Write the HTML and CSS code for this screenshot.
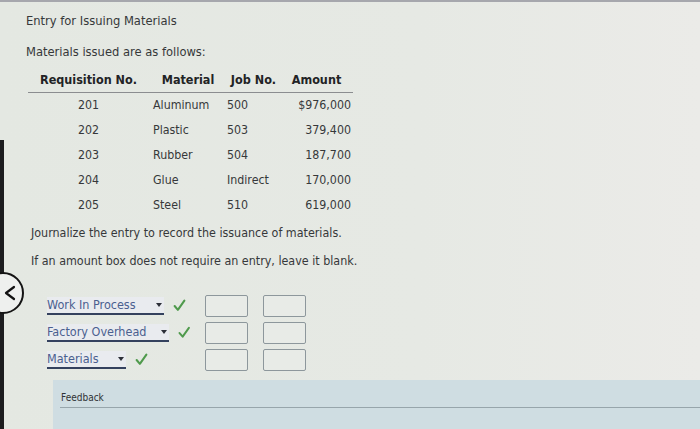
FILE: index.html
```html
<!DOCTYPE html>
<html>
<head>
<meta charset="utf-8">
<link rel="stylesheet" href="styles.css">
</head>
<body>
<div class="page">
  <div class="content">
    <div class="title">Entry for Issuing Materials</div>
    <div class="intro">Materials issued are as follows:</div>
    <div class="table">
      <div class="th">Requisition No.</div>
      <div class="th">Material</div>
      <div class="th">Job No.</div>
      <div class="th">Amount</div>

      <div class="td c1">201</div><div class="td c2">Aluminum</div><div class="td c3">500</div><div class="td c4">$976,000</div>
      <div class="td c1">202</div><div class="td c2">Plastic</div><div class="td c3">503</div><div class="td c4">379,400</div>
      <div class="td c1">203</div><div class="td c2">Rubber</div><div class="td c3">504</div><div class="td c4">187,700</div>
      <div class="td c1">204</div><div class="td c2">Glue</div><div class="td c3">Indirect</div><div class="td c4">170,000</div>
      <div class="td c1">205</div><div class="td c2">Steel</div><div class="td c3">510</div><div class="td c4">619,000</div>
    </div>
    <p class="instr first">Journalize the entry to record the issuance of materials.</p>
    <p class="instr second">If an amount box does not require an entry, leave it blank.</p>

    <div class="journal">
      <div class="acct">
        <span class="select w1"><span class="label">Work In Process</span><span class="arrow"></span></span>
        <svg class="check" viewBox="0 0 12 12"><path d="M1.5 6.5 L4.5 10 L10.5 1.5" fill="none" stroke="#4f9a4c" stroke-width="1.9" stroke-linecap="round" stroke-linejoin="round"/></svg>
      </div>
      <div class="box"></div>
      <div class="box"></div>

      <div class="acct">
        <span class="select w2"><span class="label">Factory Overhead</span><span class="arrow"></span></span>
        <svg class="check" viewBox="0 0 12 12"><path d="M1.5 6.5 L4.5 10 L10.5 1.5" fill="none" stroke="#4f9a4c" stroke-width="1.9" stroke-linecap="round" stroke-linejoin="round"/></svg>
      </div>
      <div class="box"></div>
      <div class="box"></div>

      <div class="acct">
        <span class="select w3"><span class="label">Materials</span><span class="arrow"></span></span>
        <svg class="check" viewBox="0 0 12 12"><path d="M1.5 6.5 L4.5 10 L10.5 1.5" fill="none" stroke="#4f9a4c" stroke-width="1.9" stroke-linecap="round" stroke-linejoin="round"/></svg>
      </div>
      <div class="box"></div>
      <div class="box"></div>
    </div>
  </div>

  <div class="feedback">
    <div class="fb-title">Feedback</div>
    <div class="fb-rule"></div>
  </div>

  <div class="edge-bar"></div>
  <div class="back-btn">
    <svg viewBox="0 0 20 20"><path d="M13 4 L5 10 L13 16" fill="none" stroke="#111" stroke-width="2.2" stroke-linecap="round" stroke-linejoin="round"/></svg>
  </div>
</div>
</body>
</html>
```

FILE: styles.css
```css
html, body {
  margin: 0;
  padding: 0;
  width: 700px;
  height: 429px;
  overflow: hidden;
}
body {
  background: #e5e8e3;
  font-family: "DejaVu Sans Condensed", "DejaVu Sans", Verdana, sans-serif;
  font-stretch: condensed;
  color: #36383a;
}
.page {
  position: relative;
  width: 700px;
  height: 429px;
  border-top: 2px solid #a6a7ad;
  box-sizing: border-box;
  background: linear-gradient(90deg, #e4e8e2 0%, #e6e9e4 60%, #ebebe8 100%);
}
.content {
  padding-left: 26px;
}
.title {
  padding-top: 11px;
  font-size: 12.8px;
  line-height: 16px;
}
.intro {
  margin-top: 15px;
  font-size: 12.8px;
  line-height: 16px;
}
.table {
  margin-top: 12px;
  margin-left: 2px;
  display: grid;
  grid-template-columns: 121px 78px 53px 73px;
  font-size: 12.3px;
}
.th {
  font-weight: bold;
  font-size: 12.5px;
  color: #222325;
  text-align: center;
  height: 20px;
  line-height: 16px;
  border-bottom: 1.5px solid #8b8d90;
  white-space: nowrap;
}
.td {
  height: 25px;
  line-height: 25px;
  white-space: nowrap;
}
.c1 { text-align: center; }
.c2 { padding-left: 4px; }
.c3 { padding-left: 0; }
.c4 { text-align: right; padding-right: 2px; }
.instr {
  margin: 0;
  padding-left: 5px;
  font-size: 12.4px;
  line-height: 16px;
}
.instr.first { margin-top: 7px; }
.instr.second { margin-top: 12px; }
.journal {
  margin-top: 23px;
  margin-left: 21px;
  display: grid;
  grid-template-columns: 143px 43px 43px;
  grid-auto-rows: 27px;
  column-gap: 15px;
  align-items: center;
}
.acct {
  display: flex;
  align-items: center;
  height: 27px;
}
.select {
  display: inline-flex;
  align-items: center;
  justify-content: space-between;
  height: 16px;
  border-bottom: 2px solid #34415e;
  background: #e9ebef;
  font-size: 12.5px;
  color: #4b5f8f;
  box-sizing: content-box;
  margin-top: 1px;
}
.select.w1 { width: 117px; }
.select.w2 { width: 127px; }
.select.w3 { width: 79px; }
.label { white-space: nowrap; line-height: 16px; }
.arrow {
  width: 0;
  height: 0;
  border-left: 3px solid transparent;
  border-right: 3px solid transparent;
  border-top: 4px solid #2c2f38;
  margin-right: 2px;
}
.check {
  width: 13px;
  height: 13px;
  margin-left: 9px;
}
.box {
  height: 22px;
  border: 1.5px solid #8d979c;
  border-radius: 2px;
  box-sizing: border-box;
  background: #e8ebe7;
}
.feedback {
  margin-top: 7px;
  margin-left: 53px;
  height: 60px;
  background: #cfdde2;
  padding-top: 12px;
  box-sizing: border-box;
}
.fb-title {
  margin-left: 8px;
  font-size: 10px;
  line-height: 12px;
  color: #2f3236;
}
.fb-rule {
  margin-top: 3px;
  margin-left: 7px;
  height: 1px;
  background: #97a5ab;
}
.edge-bar {
  position: absolute;
  left: 0;
  top: 138px;
  width: 4px;
  height: 291px;
  background: #1c1c1e;
}
.back-btn {
  position: absolute;
  left: -18px;
  top: 270px;
  width: 38px;
  height: 38px;
  border: 2px solid #141414;
  border-radius: 50%;
  background: #eef0ee;
  display: flex;
  align-items: center;
  justify-content: flex-end;
}
.back-btn svg {
  width: 20px;
  height: 20px;
  margin-right: 1px;
}
```
